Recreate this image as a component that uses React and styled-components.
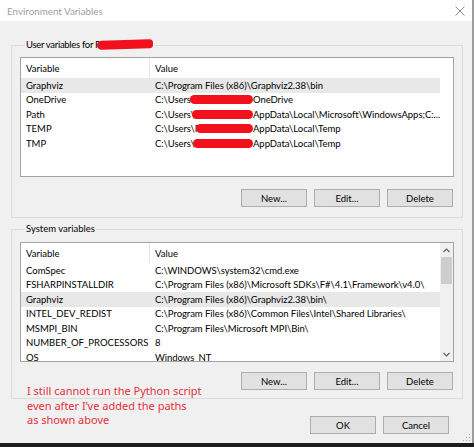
import styled, { createGlobalStyle } from "styled-components";

const GlobalStyle = createGlobalStyle`
  html, body { margin: 0; padding: 0; }
  body {
    background: #1c1c1c;
    font-family: Lato, "Noto Sans", sans-serif;
  }
`;

const userVars = [
  { name: "Graphviz", value: "C:\\Program Files (x86)\\Graphviz2.38\\bin", selected: true },
  { name: "OneDrive", prefix: "C:\\Users\\", cut: 35, blob: 63, rest: "OneDrive" },
  { name: "Path", prefix: "C:\\Users\\", cut: 37, blob: 61, rest: "AppData\\Local\\Microsoft\\WindowsApps;C:..." },
  { name: "TEMP", prefix: "C:\\Users\\R", cut: 41, blob: 57, rest: "AppData\\Local\\Temp" },
  { name: "TMP", prefix: "C:\\Users\\", cut: 38, blob: 60, rest: "AppData\\Local\\Temp" },
];

const systemVars = [
  { name: "ComSpec", value: "C:\\WINDOWS\\system32\\cmd.exe" },
  { name: "FSHARPINSTALLDIR", value: "C:\\Program Files (x86)\\Microsoft SDKs\\F#\\4.1\\Framework\\v4.0\\" },
  { name: "Graphviz", value: "C:\\Program Files (x86)\\Graphviz2.38\\bin\\", selected: true },
  { name: "INTEL_DEV_REDIST", value: "C:\\Program Files (x86)\\Common Files\\Intel\\Shared Libraries\\" },
  { name: "MSMPI_BIN", value: "C:\\Program Files\\Microsoft MPI\\Bin\\" },
  { name: "NUMBER_OF_PROCESSORS", value: "8" },
  { name: "OS", value: "Windows_NT" },
];

function CloseIcon() {
  return (
    <svg width="10" height="10" viewBox="0 0 10 10">
      <path d="M0.5 0.5 L9.5 9.5 M9.5 0.5 L0.5 9.5" stroke="#8a8a8a" strokeWidth="1" />
    </svg>
  );
}

function Chevron({ down }) {
  return (
    <svg width="7" height="5" viewBox="0 0 7 5">
      <path
        d={down ? "M0.5 1 L3.5 4 L6.5 1" : "M0.5 4 L3.5 1 L6.5 4"}
        stroke="#606060"
        strokeWidth="1.2"
        fill="none"
      />
    </svg>
  );
}

function Grip() {
  const dots = [
    [8, 2],
    [5, 5],
    [8, 5],
    [2, 8],
    [5, 8],
    [8, 8],
  ];
  return (
    <svg width="10" height="10" viewBox="0 0 10 10">
      {dots.map(([x, y]) => (
        <rect key={`${x}-${y}`} x={x} y={y} width="1" height="1" fill="#a8a8a8" />
      ))}
    </svg>
  );
}

function VarList({ rows, scroll }) {
  return (
    <ListBox>
      <Table>
        <HeaderRow>
          <HeaderCell>Variable</HeaderCell>
          <HeaderCell $divider>Value</HeaderCell>
        </HeaderRow>
        {rows.map((r) => (
          <Row key={r.name + r.value} $selected={r.selected}>
            <Cell>{r.name}</Cell>
            <ValueCell>
              {r.blob ? (
                <>
                  <Prefix style={{ width: r.cut }}>{r.prefix}</Prefix>
                  <Blob style={{ width: r.blob }} />
                  <span>{r.rest}</span>
                </>
              ) : (
                r.value
              )}
            </ValueCell>
          </Row>
        ))}
      </Table>
      {scroll && (
        <Scrollbar>
          <ScrollArrow>
            <Chevron />
          </ScrollArrow>
          <Track>
            <Thumb />
          </Track>
          <ScrollArrow>
            <Chevron down />
          </ScrollArrow>
        </Scrollbar>
      )}
    </ListBox>
  );
}

function Buttons({ gapTop }) {
  return (
    <ButtonRow $gapTop={gapTop}>
      <Button>New...</Button>
      <Button>Edit...</Button>
      <Button>Delete</Button>
    </ButtonRow>
  );
}

export default function App() {
  return (
    <>
      <GlobalStyle />
      <Screen>
        <Window>
          <TitleBar>
            <Title>Environment Variables</Title>
            <CloseIcon />
          </TitleBar>
          <Body>
            <Group $padTop={5} $padBottom={10}>
              <Legend $tight>
                User variables for R
                <LabelBlob />
              </Legend>
              <VarList rows={userVars} />
              <Buttons gapTop={12} />
            </Group>
            <Group $padTop={6} $padBottom={8} $gapTop={4}>
              <Legend>System variables</Legend>
              <VarList rows={systemVars} scroll />
              <Buttons gapTop={10} />
            </Group>
            <Footer>
              <Button>OK</Button>
              <Button>Cancel</Button>
            </Footer>
          </Body>
          <Note>
            I still cannot run the Python script
            <br />
            even after I’ve added the paths
            <br />
            as shown above
          </Note>
          <GripCorner>
            <Grip />
          </GripCorner>
        </Window>
        <Edge />
      </Screen>
    </>
  );
}

const Screen = styled.div`
  display: flex;
  width: 474px;
  height: 447px;
  background: #1c1c1c;
  overflow: hidden;
`;

const Window = styled.div`
  position: relative;
  display: flex;
  flex-direction: column;
  width: 472px;
  height: 443px;
  background: #f0f0f0;
  color: #000;
  font-size: 9.5px;
`;

const Edge = styled.div`
  width: 2px;
  height: 443px;
  background: #9c9c9c;
`;

const TitleBar = styled.div`
  display: flex;
  align-items: center;
  justify-content: space-between;
  height: 21px;
  padding: 0 7px 0 7px;
  background: #fff;
`;

const Title = styled.span`
  color: #a0a0a0;
  font-size: 9.8px;
`;

const Body = styled.div`
  display: flex;
  flex-direction: column;
  padding: 17px 9px 0 11px;
`;

const Group = styled.fieldset`
  margin: ${({ $gapTop }) => $gapTop || 0}px 0 0;
  padding: ${({ $padTop }) => $padTop}px 8px ${({ $padBottom }) => $padBottom}px;
  border: 1px solid #dcdcdc;
  min-width: 0;
`;

const Legend = styled.legend`
  margin-left: 5px;
  padding: 0 1px;
  font-size: 9.5px;
  line-height: 14px;
  letter-spacing: ${({ $tight }) => ($tight ? "-0.3px" : "0")};
  white-space: nowrap;
`;

const LabelBlob = styled.span`
  display: inline-block;
  width: 56px;
  height: 9px;
  margin-left: -4px;
  vertical-align: -1px;
  border-radius: 5px 4px 4px 5px;
  background: #f2101c;
  transform: rotate(-2deg);
`;

const ListBox = styled.div`
  display: flex;
  height: 120px;
  box-sizing: border-box;
  border: 1px solid #a3a3a3;
  background: #fff;
  overflow: hidden;
`;

const Table = styled.div`
  display: flex;
  flex-direction: column;
  width: 419px;
  flex-shrink: 0;
`;

const HeaderRow = styled.div`
  display: grid;
  grid-template-columns: 128px 1fr;
  align-items: center;
  height: 20px;
  flex-shrink: 0;
`;

const HeaderCell = styled.div`
  height: 100%;
  display: flex;
  align-items: center;
  padding-left: 5px;
  border-left: ${({ $divider }) => ($divider ? "1px solid #e5e5e5" : "none")};
`;

const Row = styled.div`
  display: grid;
  grid-template-columns: 128px 1fr;
  align-items: center;
  height: 14.5px;
  flex-shrink: 0;
  background: ${({ $selected }) => ($selected ? "#e8e8e8" : "transparent")};
`;

const Cell = styled.div`
  padding-left: 5px;
  white-space: nowrap;
`;

const ValueCell = styled.div`
  display: flex;
  align-items: center;
  padding-left: 6px;
  white-space: nowrap;
  letter-spacing: -0.05px;
`;

const Prefix = styled.span`
  flex-shrink: 0;
  overflow: visible;
`;

const Blob = styled.span`
  position: relative;
  flex-shrink: 0;
  height: 9px;
  border-radius: 5px;
  background: #f2101c;
`;

const Scrollbar = styled.div`
  display: flex;
  flex-direction: column;
  width: 13px;
  margin-left: auto;
  background: #f0f0f0;
`;

const ScrollArrow = styled.div`
  display: flex;
  align-items: center;
  justify-content: center;
  height: 14px;
`;

const Track = styled.div`
  flex: 1;
  padding: 0 1px;
`;

const Thumb = styled.div`
  height: 27px;
  background: #cdcdcd;
`;

const ButtonRow = styled.div`
  display: flex;
  justify-content: flex-end;
  gap: 7px;
  margin-top: ${({ $gapTop }) => $gapTop}px;
  padding-right: 1px;
`;

const Button = styled.button`
  width: 66px;
  height: 18px;
  padding: 0;
  border: 1px solid #adadad;
  background: #e1e1e1;
  color: #000;
  font-family: inherit;
  font-size: 9.5px;
`;

const Footer = styled.div`
  display: flex;
  justify-content: flex-end;
  gap: 7px;
  margin-top: 17px;
  padding-right: 14px;
`;

const Note = styled.div`
  position: absolute;
  left: 27px;
  top: 384px;
  color: #e3313b;
  font-family: "Noto Sans", sans-serif;
  font-size: 11px;
  line-height: 14.5px;
`;

const GripCorner = styled.div`
  position: absolute;
  right: 1px;
  bottom: 1px;
  display: flex;
`;
